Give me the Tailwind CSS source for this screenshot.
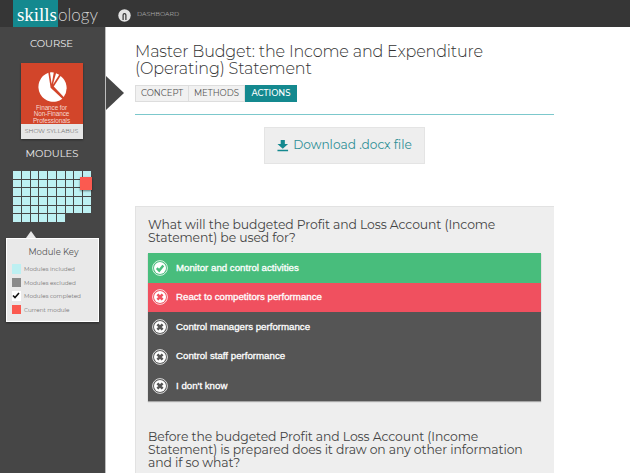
<!DOCTYPE html>
<html><head><meta charset="utf-8"><script src="https://cdn.jsdelivr.net/npm/@tailwindcss/browser@4"></script></head>
<body class="m-0 bg-white overflow-hidden">
<div class="w-[630px] h-[473px] overflow-hidden flex flex-col font-['Montserrat','Noto_Sans',sans-serif] relative">
  <header class="h-[27px] shrink-0 bg-[#363636] flex items-stretch pl-[13px]">
    <div class="w-[45px] bg-[#14898f] text-white text-[19px] leading-[29px] text-right font-['Liberation_Serif',serif] pr-[1px]">skills</div>
    <div class="text-[#d0d0d0] text-[17px] leading-[29px] font-light font-['Lato',sans-serif] w-[60px]">ology</div>
    <div class="flex items-center pt-[3px]">
      <svg width="13" height="13" viewBox="0 0 13 13"><circle cx="6.5" cy="6.5" r="6.2" fill="#e4e4e4"/><path d="M4.5 11V6a2 2 0 0 1 4 0V11H7.3V6a.8.8 0 0 0-1.6 0V11Z" fill="#363636"/></svg>
      <span class="ml-[6px] text-[6.2px] text-[#a9a9a9]">DASHBOARD</span>
    </div>
  </header>
  <div class="flex flex-1 min-h-0">
    <aside class="w-[106px] shrink-0 bg-[#464646] border-r border-[#bdbdbd] flex flex-col items-center relative">
      <div class="mt-[11px] text-[10px] leading-[12px] text-[#eeeeee] -ml-[2px]">COURSE</div>
      <div class="mt-[13px] w-[62px] h-[76px] -ml-[2px] bg-[#d2452a] flex flex-col items-center shadow-[0_1px_2px_rgba(0,0,0,.4)]">
        <svg class="mt-[9px]" width="33" height="33" viewBox="0 0 34 34"><path d="M13.5 .8A16.5 16.5 0 1 0 29 29.5L16 17.5Z" fill="#fff"/><path d="M15.3 .5A16.5 16.5 0 0 1 19.5 .6L17.2 13.5Z" fill="#fff"/><path d="M22 1.3A16.5 16.5 0 0 1 25.5 3L18.5 14Z" fill="#fff"/><path d="M27 4.5A16.5 16.5 0 0 1 30.5 27.5L19.5 16Z" fill="#fff"/></svg>
        <div class="mt-[2px] w-full text-center text-[6.4px] leading-[6.4px] tracking-[-0.1px] text-[#f6d7cf] font-['Liberation_Sans',sans-serif]">Finance for<br>Non-Finance<br>Professionals</div>
        <div class="mt-auto w-full h-[15px] bg-[#e6e6e6] text-center text-[6px] leading-[15px] text-[#777] whitespace-nowrap">SHOW SYLLABUS</div>
      </div>
      <div class="mt-[9px] text-[10px] leading-[12px] text-[#eeeeee] -ml-[1px]">MODULES</div>
      <div class="relative mt-[11px] -ml-[1px] w-[78px] h-[51px] grid grid-cols-9 grid-rows-6 gap-[1px]">
        <div class="bg-[#bdf0f2]"></div><div class="bg-[#bdf0f2]"></div><div class="bg-[#bdf0f2]"></div><div class="bg-[#bdf0f2]"></div><div class="bg-[#bdf0f2]"></div><div class="bg-[#bdf0f2]"></div><div class="bg-[#bdf0f2]"></div><div class="bg-[#bdf0f2]"></div><div class="bg-[#bdf0f2]"></div>
        <div class="bg-[#bdf0f2]"></div><div class="bg-[#bdf0f2]"></div><div class="bg-[#bdf0f2]"></div><div class="bg-[#bdf0f2]"></div><div class="bg-[#bdf0f2]"></div><div class="bg-[#bdf0f2]"></div><div class="bg-[#bdf0f2]"></div><div class="bg-[#bdf0f2]"></div><div class="bg-[#bdf0f2]"></div>
        <div class="bg-[#bdf0f2]"></div><div class="bg-[#bdf0f2]"></div><div class="bg-[#bdf0f2]"></div><div class="bg-[#bdf0f2]"></div><div class="bg-[#bdf0f2]"></div><div class="bg-[#bdf0f2]"></div><div class="bg-[#bdf0f2]"></div><div class="bg-[#bdf0f2]"></div><div class="bg-[#bdf0f2]"></div>
        <div class="bg-[#bdf0f2]"></div><div class="bg-[#bdf0f2]"></div><div class="bg-[#bdf0f2]"></div><div class="bg-[#bdf0f2]"></div><div class="bg-[#bdf0f2]"></div><div class="bg-[#bdf0f2]"></div><div class="bg-[#bdf0f2]"></div><div class="bg-[#bdf0f2]"></div><div class="bg-[#bdf0f2]"></div>
        <div class="bg-[#bdf0f2]"></div><div class="bg-[#bdf0f2]"></div><div class="bg-[#bdf0f2]"></div><div class="bg-[#bdf0f2]"></div><div class="bg-[#bdf0f2]"></div><div class="bg-[#bdf0f2]"></div><div class="bg-[#bdf0f2]"></div><div class="bg-[#bdf0f2]"></div><div class="bg-[#bdf0f2]"></div>
        <div class="bg-[#bdf0f2]"></div><div class="bg-[#bdf0f2]"></div><div class="bg-[#bdf0f2]"></div><div class="bg-[#bdf0f2]"></div><div class="bg-[#bdf0f2]"></div><div class="bg-[#bdf0f2]"></div>
        <div class="absolute left-[67px] top-[6px] w-[12px] h-[13px] bg-[#fb5a50] shadow-[0_1px_2px_rgba(0,0,0,.5)]"></div>
      </div>
      <div class="relative mt-[16px] w-[93px] h-[84px] -ml-[1px] bg-[#e9e9e9] border border-white shadow-[0_1px_2px_rgba(0,0,0,.4)] pl-[5px]">
        <div class="absolute left-[19px] -top-[8px] w-0 h-0 border-x-[5px] border-x-transparent border-b-[7px] border-b-[#e9e9e9]"></div>
        <div class="mt-[7px] text-center text-[8.5px] leading-[12px] text-[#555] -ml-[2px]">Module Key</div>
        <div class="mt-[6px] flex flex-col gap-[4px] text-[5.7px] leading-[9.5px] text-[#777] whitespace-nowrap">
          <div class="flex items-center gap-[3px]"><span class="w-[9.5px] h-[9.5px] bg-[#bdf0f2] shrink-0"></span>Modules included</div>
          <div class="flex items-center gap-[3px]"><span class="w-[9.5px] h-[9.5px] bg-[#8a8a8a] shrink-0"></span>Modules excluded</div>
          <div class="flex items-center gap-[3px]"><span class="w-[9.5px] h-[9.5px] bg-white shrink-0 flex items-center justify-center"><svg width="8" height="7" viewBox="0 0 8 7"><path d="M1 3.5L3 5.5L7 1" fill="none" stroke="#111" stroke-width="1.6"/></svg></span>Modules completed</div>
          <div class="flex items-center gap-[3px]"><span class="w-[9.5px] h-[9.5px] bg-[#fb5a50] shrink-0"></span>Current module</div>
        </div>
      </div>
    </aside>
    <main class="relative flex-1 min-w-0 pl-[29px] pr-[76px] overflow-hidden">
      <div class="absolute -left-[1px] top-[48px] w-0 h-0 border-y-[18px] border-y-transparent border-l-[19px] border-l-[#464646]"></div>
      <h1 class="mt-[16px] text-[16px] leading-[17px] tracking-[-0.15px] font-light text-[#333] whitespace-nowrap">Master Budget: the Income and Expenditure<br>(Operating) Statement</h1>
      <div class="mt-[8px] flex h-[17px] text-[8.5px] leading-[15px] text-[#555]">
        <div class="w-[54px] text-center bg-[#f1f1f1] border border-[#dddddd]">CONCEPT</div>
        <div class="w-[56px] text-center bg-[#f1f1f1] border border-l-0 border-[#dddddd]">METHODS</div>
        <div class="w-[52px] text-center bg-[#14898f] text-white leading-[17px] font-medium">ACTIONS</div>
      </div>
      <div class="mt-[12px] h-[1px] bg-[#7cc8cc]"></div>
      <div class="mt-[12px] w-[161px] h-[37px] ml-[129px] bg-[#eeeeee] border border-[#e4e4e4] flex items-center justify-center text-[#2d8f96] text-[12.2px] gap-[4px] whitespace-nowrap">
        <svg width="12" height="13" viewBox="0 0 13 13"><path d="M4 0.5H8.5V5H12L6.25 10L0.5 5H4Z M0.5 11H12V12.8H0.5Z" fill="#14898f"/></svg>
        <span>Download .docx file</span>
      </div>
      <section class="mt-[42px] h-[300px] bg-[#eeeeee] border-t border-l border-[#e2e2e2] pt-[11px] px-[12px]">
        <p class="text-[12.4px] leading-[13px] tracking-[-0.09px] text-[#444] whitespace-nowrap">What will the budgeted Profit and Loss Account (Income<br>Statement) be used for?</p>
        <div class="mt-[9px] w-[393px] shadow-[0_1px_1px_rgba(0,0,0,.3)] font-['Liberation_Sans',sans-serif] text-[9.7px] [-webkit-text-stroke:0.3px_white] text-white">
          <div class="h-[29.6px] bg-[#48bd7c] flex items-center pl-[4px] gap-[8px]"><svg width="16" height="16" viewBox="0 0 16 16"><circle cx="8" cy="8" r="7.4" fill="none" stroke="#fff" stroke-width=".8"/><circle cx="8" cy="8" r="6" fill="#fff"/><path d="M4.8 8.2L7.2 10.6L11.3 5.6" fill="none" stroke="#48bd7c" stroke-width="2.4"/></svg>Monitor and control activities</div>
          <div class="h-[29.6px] bg-[#f0505f] flex items-center pl-[4px] gap-[8px]"><svg width="16" height="16" viewBox="0 0 16 16"><circle cx="8" cy="8" r="7.4" fill="none" stroke="#fff" stroke-width=".8"/><circle cx="8" cy="8" r="6" fill="#fff"/><path d="M5.4 5.4L10.6 10.6M10.6 5.4L5.4 10.6" stroke="#f0505f" stroke-width="2.6"/></svg>React to competitors performance</div>
          <div class="h-[29.6px] bg-[#555555] flex items-center pl-[4px] gap-[8px]"><svg width="16" height="16" viewBox="0 0 16 16"><circle cx="8" cy="8" r="7.4" fill="none" stroke="#fff" stroke-width=".8"/><circle cx="8" cy="8" r="6" fill="#fff"/><path d="M5.4 5.4L10.6 10.6M10.6 5.4L5.4 10.6" stroke="#555" stroke-width="2.6"/></svg>Control managers performance</div>
          <div class="h-[29.6px] bg-[#555555] flex items-center pl-[4px] gap-[8px]"><svg width="16" height="16" viewBox="0 0 16 16"><circle cx="8" cy="8" r="7.4" fill="none" stroke="#fff" stroke-width=".8"/><circle cx="8" cy="8" r="6" fill="#fff"/><path d="M5.4 5.4L10.6 10.6M10.6 5.4L5.4 10.6" stroke="#555" stroke-width="2.6"/></svg>Control staff performance</div>
          <div class="h-[29.6px] bg-[#555555] flex items-center pl-[4px] gap-[8px]"><svg width="16" height="16" viewBox="0 0 16 16"><circle cx="8" cy="8" r="7.4" fill="none" stroke="#fff" stroke-width=".8"/><circle cx="8" cy="8" r="6" fill="#fff"/><path d="M5.4 5.4L10.6 10.6M10.6 5.4L5.4 10.6" stroke="#555" stroke-width="2.6"/></svg>I don't know</div>
        </div>
        <p class="mt-[29px] text-[12.4px] leading-[13px] tracking-[-0.09px] text-[#444] whitespace-nowrap">Before the budgeted Profit and Loss Account (Income<br>Statement) is prepared does it draw on any other information<br>and if so what?</p>
      </section>
    </main>
  </div>
</div>
</body></html>
